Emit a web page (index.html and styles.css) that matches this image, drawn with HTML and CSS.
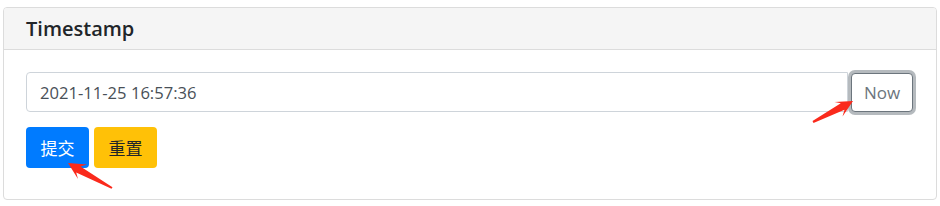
FILE: index.html
```html
<!DOCTYPE html>
<html lang="zh">
<head>
<meta charset="utf-8">
<title>Timestamp</title>
<link rel="stylesheet" href="styles.css">
</head>
<body>
<div class="card">
  <div class="card-header">Timestamp</div>
  <div class="card-body">
    <div class="input-group">
      <div class="form-control">2021-11-25 16:57:36</div>
      <div class="btn-now">Now</div>
    </div>
    <div class="actions">
      <span class="btn btn-primary">提交</span>
      <span class="btn btn-warning">重置</span>
    </div>
  </div>
</div>
<svg class="annot" width="940" height="206" viewBox="0 0 940 206">
  <polygon fill="#fa2a1c" points="68,163 87,164.5 80.5,166.5 112.5,187.2 111.5,188.8 76.2,172.5 78,179"/>
  <polygon fill="#fa2a1c" points="853,101 842.5,116.5 844.5,109.8 813.5,122.9 812.5,121.1 840.8,103.2 834.5,102"/>
</svg>
</body>
</html>
```
FILE: styles.css
```css
* { box-sizing: border-box; }
html, body { margin: 0; padding: 0; background: #fff; }
body {
  width: 940px;
  height: 206px;
  position: relative;
  padding: 7px 3px 0 3px;
  font-family: "Open Sans", "Noto Sans CJK SC", sans-serif;
  color: #212529;
}
.card {
  width: 934px;
  height: 193px;
  border: 1px solid #dcdcdc;
  border-radius: 4px;
  background: #fff;
  overflow: hidden;
}
.card-header {
  height: 42px;
  background: #f5f5f5;
  border-bottom: 1px solid #dcdcdc;
  padding: 0 22px;
  display: flex;
  align-items: center;
  font-size: 20px;
  font-weight: 600;
  color: #212529;
}
.card-body {
  padding: 22px 21px 0 22px;
}
.input-group {
  display: flex;
  align-items: center;
  height: 40px;
}
.form-control {
  flex: 1;
  height: 40px;
  border: 1px solid #ced4da;
  border-radius: 4px 0 0 4px;
  padding: 0 13px;
  display: flex;
  align-items: center;
  font-size: 16.6px;
  color: #495057;
  font-family: "Open Sans", sans-serif;
}
.btn-now {
  width: 62px;
  height: 39px;
  margin-left: 3px;
  margin-right: 2px;
  border: 1px solid #6c757d;
  border-radius: 4px;
  box-shadow: 0 0 0 3px rgba(108, 117, 125, 0.5);
  display: flex;
  align-items: center;
  justify-content: center;
  font-size: 17px;
  color: #6c757d;
  background: #fff;
  position: relative;
}
.actions {
  display: flex;
  gap: 5px;
  margin-top: 15px;
}
.btn {
  width: 63px;
  height: 41px;
  border-radius: 4px;
  display: flex;
  align-items: center;
  justify-content: center;
  font-size: 17px;
  font-family: "Noto Sans CJK SC", sans-serif;
}
.btn-primary { background: #007bff; color: #fff; }
.btn-warning { background: #ffc107; color: #212529; }
.annot {
  position: absolute;
  left: 0;
  top: 0;
  pointer-events: none;
}
```
